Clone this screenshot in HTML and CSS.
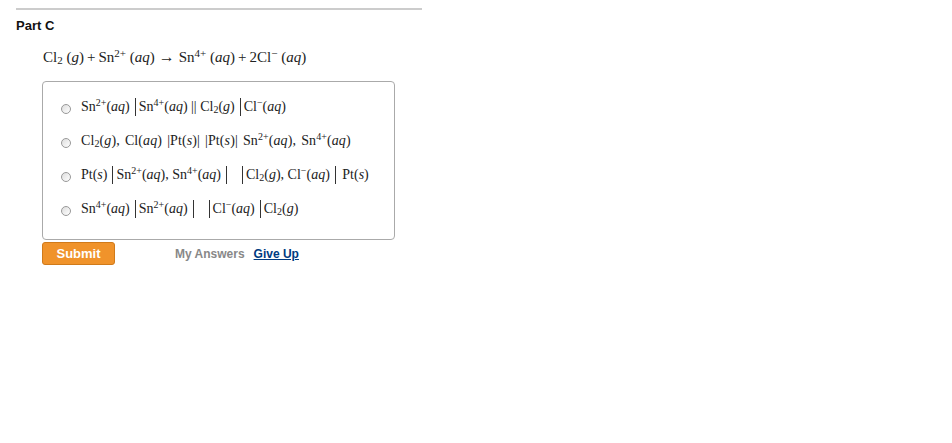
FILE: index.html
```html
<!DOCTYPE html>
<html>
	<head>
		<meta charset="UTF-8">
		<title>Part C</title>
		<link rel="stylesheet" href="styles.css">
	</head>
	<body>
		<div class="part">
			<div class="title">Part C</div>
			<div class="question m">Cl<sub>2</sub>&nbsp;(<i>g</i>)<span class="op">+</span>Sn<sup>2+</sup>&nbsp;(<i>aq</i>)<span class="op arrow">&rarr;</span>Sn<sup>4+</sup>&nbsp;(<i>aq</i>)<span class="op">+</span>2Cl<sup>&minus;</sup>&nbsp;(<i>aq</i>)</div>
			<form class="answers">
				<label class="row">
					<input type="radio" name="ans">
					<span class="m">Sn<sup>2+</sup>(<i>aq</i>)<span class="bar"></span>Sn<sup>4+</sup>(<i>aq</i>) || Cl<sub>2</sub>(<i>g</i>)<span class="bar"></span>Cl<sup>&minus;</sup>(<i>aq</i>)</span>
				</label>
				<label class="row">
					<input type="radio" name="ans">
					<span class="m wide">Cl<sub>2</sub>(<i>g</i>), Cl(<i>aq</i>) |Pt(<i>s</i>)| |Pt(<i>s</i>)| Sn<sup>2+</sup>(<i>aq</i>), Sn<sup>4+</sup>(<i>aq</i>)</span>
				</label>
				<label class="row">
					<input type="radio" name="ans">
					<span class="m">Pt(<i>s</i>)<span class="bar"></span>Sn<sup>2+</sup>(<i>aq</i>), Sn<sup>4+</sup>(<i>aq</i>)<span class="bar"></span><span class="gap"></span><span class="bar"></span>Cl<sub>2</sub>(<i>g</i>), Cl<sup>&minus;</sup>(<i>aq</i>)<span class="bar"></span> Pt(<i>s</i>)</span>
				</label>
				<label class="row">
					<input type="radio" name="ans">
					<span class="m">Sn<sup>4+</sup>(<i>aq</i>)<span class="bar"></span>Sn<sup>2+</sup>(<i>aq</i>)<span class="bar"></span><span class="gap"></span><span class="bar"></span>Cl<sup>&minus;</sup>(<i>aq</i>)<span class="bar"></span>Cl<sub>2</sub>(<i>g</i>)</span>
				</label>
			</form>
			<div class="actions">
				<button type="button" class="submit">Submit</button>
				<span class="my">My Answers</span>
				<a href="#" class="giveup">Give Up</a>
			</div>
		</div>
	</body>
</html>
```

FILE: styles.css
```css
body {
	margin: 0;
	background: #fff;
	font-family: "Liberation Sans", Arial, sans-serif;
}
.part {
	width: 406px;
	margin: 8px 0 0 16px;
	border-top: 2px solid #ccc;
}
.title {
	font-size: 13px;
	font-weight: bold;
	color: #111;
	margin-top: 8px;
	line-height: 16px;
}
.m {
	font-family: "Liberation Serif", "Times New Roman", serif;
	font-size: 14px;
	color: #222;
	white-space: nowrap;
}
.m i {
	font-style: italic;
}
.m sup, .m sub {
	font-size: 10px;
	line-height: 0;
}
.m sup {
	vertical-align: 5px;
}
.m sub {
	vertical-align: -2px;
}
.wide {
	word-spacing: 1.5px;
	letter-spacing: 0.1px;
}
.op {
	margin: 0 3px;
}
.arrow {
	display: inline-block;
	font-size: 16px;
	margin: 0 4px;
}
.bar {
	display: inline-block;
	width: 0;
	height: 18px;
	border-left: 1px solid #333;
	vertical-align: -5px;
	margin: 0 3px 0 5px;
}
.gap {
	display: inline-block;
	width: 7px;
}
.question {
	margin: 13px 0 0 27px;
	font-size: 15px;
	line-height: 20px;
}
.question sup, .question sub {
	font-size: 11px;
}
.answers {
	width: 351px;
	margin: 14px 0 0 26px;
	padding: 8px 0 13px 0;
	border: 1px solid #aaa;
	border-radius: 4px;
}
.row {
	display: flex;
	align-items: center;
	height: 34px;
	padding-left: 18px;
}
.row input {
	appearance: none;
	-webkit-appearance: none;
	width: 10px;
	height: 10px;
	margin: 4px 10px 0 0;
	border: 1px solid #999;
	border-radius: 50%;
	background: linear-gradient(135deg, #ddd, #fff);
	flex: none;
}
.actions {
	display: flex;
	align-items: center;
	margin: 2px 0 0 26px;
}
.submit {
	width: 73px;
	height: 23px;
	background: #f0932b;
	border: 1px solid #d07a1a;
	border-radius: 3px;
	color: #fff;
	font-family: "Liberation Sans", Arial, sans-serif;
	font-size: 13px;
	font-weight: bold;
	padding: 0;
}
.my {
	margin-left: 60px;
	color: #888;
	font-size: 12px;
	font-weight: bold;
}
.giveup {
	margin-left: 9px;
	color: #003a80;
	font-size: 12px;
	font-weight: bold;
}
```
